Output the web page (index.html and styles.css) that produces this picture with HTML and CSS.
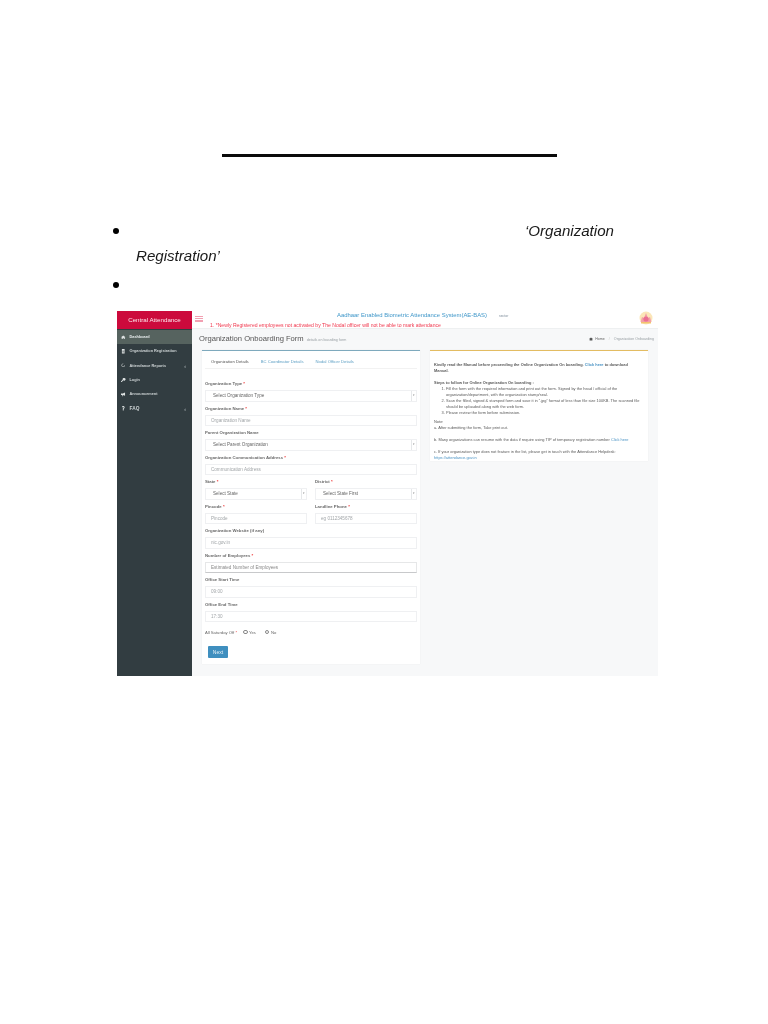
FILE: index.html
```html
<!DOCTYPE html>
<html lang="en">
<head>
<meta charset="utf-8">
<title>Organization Onboarding Form</title>
<link rel="stylesheet" href="styles.css">
</head>
<body>
<div class="rule"></div>
<ul class="steps">
  <li class="step"><span class="dot"></span><p class="step-text"><span class="blank"></span><em>‘Organization Registration’</em></p></li>
  <li class="step step-empty"><span class="dot"></span></li>
</ul>
<div class="app">
  <aside class="side">
    <div class="brand">Central Attendance</div>
    <nav class="menu">
      <div class="item active"><svg viewBox="0 0 10 10"><path d="M5 1 L10 5 H8.5 V9 H6 V6.5 H4 V9 H1.5 V5 H0 Z"/></svg><span>Dashboard</span></div>
      <div class="item"><svg viewBox="0 0 10 10"><path d="M2 0 H8 V10 H2 Z M3 2 V3 H7 V2 Z M3 4.5 V5.5 H7 V4.5 Z M3 7 V8 H7 V7 Z" fill-rule="evenodd"/></svg><span>Organization Registration</span></div>
      <div class="item"><svg viewBox="0 0 10 10"><path d="M5 1 A4 4 0 1 0 9 5 H7.8 A2.8 2.8 0 1 1 5 2.2 Z"/></svg><span>Attendance Reports</span><i class="caret">‹</i></div>
      <div class="item"><svg viewBox="0 0 10 10"><path d="M7 0 A3 3 0 1 1 5 5 L1.5 9.5 H0 V7.5 L3.8 3.6 A3 3 0 0 1 7 0 Z"/></svg><span>Login</span></div>
      <div class="item"><svg viewBox="0 0 10 10"><path d="M0 3.5 H4 L9 1 V8.5 L4 6.5 H3.5 L4 9.5 H2.5 L2 6.5 H0 Z"/></svg><span>Announcement</span></div>
      <div class="item item-faq"><svg viewBox="0 0 10 10"><path d="M2 3 A3 3 0 1 1 6 6 V7.5 H4 V5 C6.5 4.5 6 2 5 2 C4 2 4 3 4 3 Z M4 8 H6 V10 H4 Z"/></svg><span>FAQ</span><i class="caret">‹</i></div>
    </nav>
  </aside>
  <main class="main">
    <header class="top">
      <div class="burger"><b></b><b></b><b></b></div>
      <div class="notice">
        <div class="sys"><span class="sys-name">Aadhaar Enabled Biometric Attendance System(AE-BAS)</span><span class="sys-tag">sector</span></div>
        <div class="alert">1. *Newly Registered employees not activated by The Nodal officer will not be able to mark attendance</div>
      </div>
      <svg class="emblem" viewBox="0 0 16 14"><circle cx="8" cy="7" r="6.5" fill="#fbe6b8"/><path d="M2.5 11 L4 6 L6 7 L8 2 L10 7 L12 6 L13.5 11 Z" fill="#f3a0a8"/><circle cx="8" cy="8" r="2.6" fill="#ea6f92"/><path d="M3 12.5 H13 V11 H3 Z" fill="#f2c46e"/></svg>
    </header>
    <div class="crumbs">
      <h1 class="page-title">Organization Onboarding Form<small>details on boarding form</small></h1>
      <div class="path"><svg viewBox="0 0 10 10"><path d="M5 1 L10 5 H8.5 V9 H1.5 V5 H0 Z"/></svg>Home<span class="sep">/</span><span class="muted">Organization Onboarding</span></div>
    </div>
    <div class="columns">
      <section class="card form-card">
        <div class="tabs">
          <span class="tab current">Organization Details</span>
          <span class="tab">BC Coordinator Details</span>
          <span class="tab">Nodal Officer Details</span>
        </div>
        <div class="fields">
          <div class="field"><label>Organization Type <u>*</u></label><div class="select">Select Organization Type<s>▾</s></div></div>
          <div class="field"><label>Organization Name <u>*</u></label><div class="input ph">Organization Name</div></div>
          <div class="field"><label>Parent Organization Name</label><div class="select">Select Parent Organization<s>▾</s></div></div>
          <div class="field"><label>Organization Communication Address <u>*</u></label><div class="input ph">Communication Address</div></div>
          <div class="pair">
            <div class="field"><label>State <u>*</u></label><div class="select">Select State<s>▾</s></div></div>
            <div class="field"><label>District <u>*</u></label><div class="select">Select State First<s>▾</s></div></div>
          </div>
          <div class="pair">
            <div class="field"><label>Pincode <u>*</u></label><div class="input ph">Pincode</div></div>
            <div class="field"><label>Landline Phone <u>*</u></label><div class="input ph">eg 0112345678</div></div>
          </div>
          <div class="field"><label>Organization Website (if any)</label><div class="input ph">nic.gov.in</div></div>
          <div class="field"><label>Number of Employees <u>*</u></label><div class="input ph shadow">Estimated Number of Employees</div></div>
          <div class="field"><label>Office Start Time</label><div class="input ph">09:00</div></div>
          <div class="field"><label>Office End Time</label><div class="input ph">17:30</div></div>
        </div>
        <div class="radios">All Saturday Off <u>*</u><span class="radio"></span>Yes<span class="radio radio-no"></span>No</div>
        <button class="next" type="button">Next</button>
      </section>
      <section class="card info-card">
        <p class="lead">Kindly read the Manual before proceeding the Online Organization On boarding. <a>Click here</a> to download Manual.</p>
        <p class="req">Steps to follow for Online Organization On boarding :</p>
        <ol class="info-steps">
          <li>Fill the form with the required information and print out the form. Signed by the head / official of the organization/department, with the organization stamp/seal.</li>
          <li>Scan the filled, signed &amp; stamped form and save it in “.jpg” format of less than file size 100KB. The scanned file should be uploaded along with the web form.</li>
          <li>Please review the form before submission.</li>
        </ol>
        <p class="note">Note:<br>a. After submitting the form, Take print out.</p>
        <p class="note">b. Many organizations can resume with the data if require using TIP of temporary registration number <a>Click here</a></p>
        <p class="note">c. If your organization type does not feature in the list, please get in touch with the Attendance Helpdesk: <a>https://attendance.gov.in</a></p>
      </section>
    </div>
  </main>
</div>
</body>
</html>
```
FILE: styles.css
```css
* { box-sizing: border-box; }
html, body { margin: 0; padding: 0; background: #fff; }
body { font-family: "Liberation Sans", Arial, sans-serif; width: 768px; height: 1024px; overflow: hidden; }

.rule { width: 335px; height: 3px; margin: 154px 0 0 222px; background: #0a0a0a; filter: blur(.25px); }

.steps { list-style: none; margin: 61px 0 0; padding: 0 0 0 113px; filter: blur(.35px); }
.step { display: flex; align-items: flex-start; }
.step-empty { height: 25px; margin-top: 4px; }
.dot { width: 6px; height: 6px; border-radius: 50%; background: #000; margin: 10px 17px 0 0; flex: none; }
.step-text { margin: 0; width: 484px; font-size: 15.1px; line-height: 25px; color: #1a1a1a; }
.blank { display: inline-block; width: 389px; }

.app { display: flex; width: 541px; height: 365px; margin: 14px 0 0 117px; background: #f7f8f9; filter: blur(.45px); color: #555; }

.side { width: 75px; flex: none; background: #323d41; }
.brand { height: 18px; background: #cc0a3c; color: #fde8ee; font-size: 6.2px; line-height: 18px; text-align: center; }
.menu { font-size: 3.85px; color: #cdd3d4; padding-top: 1px; }
.item { display: flex; align-items: center; height: 14.3px; padding: 0 6px 0 4px; font-weight: bold; }
.item svg { width: 4.5px; height: 4.5px; fill: #dfe3e3; margin-right: 4px; flex: none; }
.item span { flex: 1; white-space: nowrap; }
.active { background: #56635f; color: #e8edee; }
.item-faq span { font-size: 4.8px; }
.caret { font-style: normal; font-size: 5px; color: #a9b1b3; }

.main { flex: 1; min-width: 0; display: flex; flex-direction: column; }
.top { height: 18px; background: #fff; display: flex; align-items: flex-start; border-bottom: 1px solid #eef0f1; padding: 0 4px 0 3px; }
.burger { width: 8px; margin-top: 4.5px; flex: none; display: flex; flex-direction: column; gap: 1px; }
.burger b { display: block; height: 1.4px; background: #f2a0b2; }
.notice { flex: 1; min-width: 0; padding-left: 7px; white-space: nowrap; }
.sys { font-size: 5.92px; line-height: 7px; color: #3f97c9; padding: 0.5px 0 0 127px; }
.sys-tag { font-size: 3.4px; margin-left: 12px; color: #7c8b99; }
.alert { font-size: 5.1px; line-height: 6px; margin-top: 2.5px; color: #f0364c; }
.emblem { width: 16px; height: 14px; flex: none; }

.crumbs { display: flex; align-items: center; justify-content: space-between; padding: 1px 4px 0 7px; height: 18px; }
.page-title { margin: 0; font-size: 7.6px; font-weight: normal; color: #555; white-space: nowrap; }
.page-title small { font-size: 3.7px; margin-left: 3px; color: #9aa1a5; }
.path { font-size: 3.6px; color: #666; white-space: nowrap; display: flex; align-items: center; }
.path svg { width: 4px; height: 4px; margin-right: 2px; fill: #555; }
.sep { margin: 0 4px; color: #bbb; }
.muted { color: #9aa1a5; }

.columns { display: flex; align-items: flex-start; padding: 3px 10px 0 10px; gap: 10px; }
.card { background: #fff; box-shadow: 0 0 1px rgba(0,0,0,.08); }
.form-card { width: 218px; height: 314px; flex: none; border-top: 1.5px solid #7ea9bd; padding: 0 3px; }
.tabs { display: flex; height: 18px; align-items: center; font-size: 4.2px; color: #5d9fc4; border-bottom: 1px solid #f2f2f2; padding: 3px 0 0 6px; }
.tab { margin-right: 12px; white-space: nowrap; }
.current { color: #555; }
.fields { display: flex; flex-direction: column; gap: 3.05px; padding-top: 11px; }
.field { flex: 1; min-width: 0; }
.field label { display: block; font-size: 4.3px; line-height: 8px; height: 10px; color: #6a6a6a; white-space: nowrap; font-weight: bold; }
.field u, .radios u { color: #e33; text-decoration: none; }
.pair { display: flex; gap: 8px; }
.select, .input { height: 11.5px; border: 1px solid #eff0f2; font-size: 4.6px; line-height: 9.5px; padding: 0 0 0 6px; color: #666; position: relative; white-space: nowrap; }
.input { padding-left: 5px; }
.ph { color: #a2a6a9; }
.shadow { border-color: #e6e7e8; border-bottom-color: #c8c9cb; color: #888; }
.select { padding-left: 7px; }
.select s { position: absolute; right: 0; top: 0; bottom: 0; width: 5px; border-left: 1px solid #e6e8ea; text-decoration: none; font-size: 3px; text-align: center; color: #888; }
.radios { font-size: 4.2px; margin-top: 6px; color: #666; height: 10px; line-height: 10px; white-space: nowrap; }
.radio { display: inline-block; width: 4.5px; height: 4.5px; border: .6px solid #888; border-radius: 50%; margin: 0 1.5px 0 6px; }
.radio-no { margin-left: 9px; }
.next { display: block; width: 20px; height: 12px; margin: 8px 0 0 3px; padding: 0; border: 0; border-radius: 1px; background: #3f8fbf; color: #e6f2f8; font: 5px "Liberation Sans", Arial, sans-serif; }

.info-card { flex: 1; min-width: 0; height: 111px; border-top: 1.5px solid #e3bc62; padding: 11px 4px 0 4px; font-size: 3.95px; line-height: 6px; color: #5a5a5a; }
.info-card p { margin: 0; }
.info-card a { color: #4a93c4; }
.lead { font-weight: bold; padding-right: 10px; }
.req { margin-top: 6px !important; font-weight: bold; }
.info-steps { margin: 0; padding: 0 0 0 12px; }
.note { margin-top: 3px !important; }
.note + .note { margin-top: 6px !important; }
```
